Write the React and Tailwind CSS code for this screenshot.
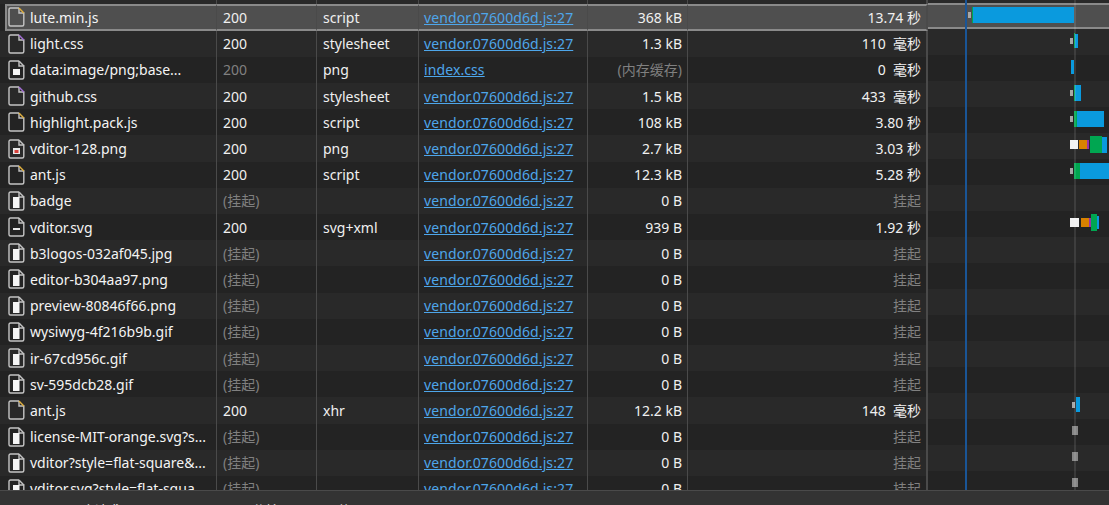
import React from "react";

const B = "#0a9ade";
const G = "#00a651";
const O = "#d98200";
const P = "#9b30a8";
const W = "#f2f2f2";
const S = "#a8a8a8";
const D = "#868686";

const PENDING_BAR = [[1072, 1078, 9, D]];

const rows = [
  { name: "lute.min.js", icon: "js", status: "200", type: "script", size: "368 kB", time: "13.74 秒", bars: [[968, 971, 6, S], [972, 973, 16, G], [973, 1074, 16, B]] },
  { name: "light.css", icon: "css", status: "200", type: "stylesheet", size: "1.3 kB", time: "110  毫秒", bars: [[1070, 1073, 6, S], [1074, 1075, 15, G], [1075, 1078, 14, B]] },
  { name: "data:image/png;base...", icon: "img", status: "200", dim: true, type: "png", link: "index.css", size: "(内存缓存)", dimSize: true, time: "0  毫秒", bars: [[1071, 1074, 14, B]] },
  { name: "github.css", icon: "css", status: "200", type: "stylesheet", size: "1.5 kB", time: "433  毫秒", bars: [[1070, 1073, 6, S], [1074, 1075, 16, G], [1075, 1081, 16, B]] },
  { name: "highlight.pack.js", icon: "js", status: "200", type: "script", size: "108 kB", time: "3.80 秒", bars: [[1070, 1073, 6, S], [1074, 1077, 16, G], [1077, 1104, 16, B]] },
  { name: "vditor-128.png", icon: "png", status: "200", type: "png", size: "2.7 kB", time: "3.03 秒", bars: [[1070, 1078, 9, W], [1079, 1087, 9, O], [1087, 1089, 9, P], [1090, 1102, 17, G], [1102, 1107, 16, B]] },
  { name: "ant.js", icon: "js", status: "200", type: "script", size: "12.3 kB", time: "5.28 秒", bars: [[1070, 1073, 6, S], [1074, 1080, 16, G], [1080, 1109, 16, B]] },
  { name: "badge", icon: "pending", status: "(挂起)", dim: true, type: "", size: "0 B", time: "挂起", dimTime: true },
  { name: "vditor.svg", icon: "svg", status: "200", type: "svg+xml", size: "939 B", time: "1.92 秒", bars: [[1070, 1079, 9, W], [1081, 1089, 9, O], [1089, 1091, 9, P], [1091, 1097, 17, G], [1097, 1099, 13, B]] },
  { name: "b3logos-032af045.jpg", icon: "pending", status: "(挂起)", dim: true, type: "", size: "0 B", time: "挂起", dimTime: true },
  { name: "editor-b304aa97.png", icon: "pending", status: "(挂起)", dim: true, type: "", size: "0 B", time: "挂起", dimTime: true },
  { name: "preview-80846f66.png", icon: "pending", status: "(挂起)", dim: true, type: "", size: "0 B", time: "挂起", dimTime: true },
  { name: "wysiwyg-4f216b9b.gif", icon: "pending", status: "(挂起)", dim: true, type: "", size: "0 B", time: "挂起", dimTime: true },
  { name: "ir-67cd956c.gif", icon: "pending", status: "(挂起)", dim: true, type: "", size: "0 B", time: "挂起", dimTime: true },
  { name: "sv-595dcb28.gif", icon: "pending", status: "(挂起)", dim: true, type: "", size: "0 B", time: "挂起", dimTime: true },
  { name: "ant.js", icon: "js", status: "200", type: "xhr", size: "12.2 kB", time: "148  毫秒", bars: [[1072, 1075, 6, S], [1076, 1080, 15, B]] },
  { name: "license-MIT-orange.svg?s...", icon: "pending", status: "(挂起)", dim: true, type: "", size: "0 B", time: "挂起", dimTime: true, bars: PENDING_BAR },
  { name: "vditor?style=flat-square&...", icon: "pending", status: "(挂起)", dim: true, type: "", size: "0 B", time: "挂起", dimTime: true, bars: PENDING_BAR },
  { name: "vditor.svg?style=flat-squa...", icon: "pending", status: "(挂起)", dim: true, type: "", size: "0 B", time: "挂起", dimTime: true, bars: PENDING_BAR },
];

function FileIcon({ kind }) {
  const corner = kind === "css" ? "#a46fd6" : kind === "js" ? "#e0b040" : "#c4c4c4";
  return (
    <svg width="17" height="20" viewBox="0 0 17 20" className="shrink-0" fill="none">
      <path d="M11 1H2.5Q1 1 1 2.5V17.5Q1 19 2.5 19H14.3Q15.8 19 15.8 17.5V6H11V1" stroke="#c4c4c4" strokeWidth="1.4" />
      <path d="M11 1L15.8 6" stroke={corner} strokeWidth="1.4" />
      {kind === "img" && <rect x="5" y="9" width="7" height="6" fill="#f5f5f5" />}
      {kind === "png" && (
        <>
          <rect x="5" y="9" width="7" height="6" fill="#e8e8e8" />
          <rect x="6.5" y="11" width="4" height="3" fill="#d8403a" />
        </>
      )}
      {kind === "svg" && <rect x="5" y="11" width="7" height="2" fill="#e8e8e8" />}
      {kind === "pending" && <rect x="5" y="6" width="6.5" height="11" fill="#f5f5f5" />}
    </svg>
  );
}

function Bars({ bars }) {
  let prev = 928;
  return (
    <div className="flex items-center h-full pb-[3px] overflow-hidden">
      {(bars || []).map(([from, to, h, color], i) => {
        const gap = from - prev;
        prev = to;
        return <div key={i} className="shrink-0" style={{ marginLeft: gap, width: to - from, height: h, background: color }} />;
      })}
    </div>
  );
}

function Row({ row, index }) {
  const selected = index === 0;
  const bg = selected ? "bg-[#4f4f4f] border-y-2 border-y-[#8a8a8a]" : index % 2 === 1 ? "bg-[#292929]" : "bg-[#232323]";
  const cell = `${bg} flex items-center min-w-0 overflow-hidden whitespace-pre border-r-[#4a4a4a]`;
  const height = selected ? "h-[26.4px]" : "h-[26.2px]";
  return (
    <div className={`grid grid-cols-[217px_100px_102px_169px_100px_240px] shrink-0 ${height}`}>
      <div className={`${cell} border-r gap-[5px] ${selected ? "ml-[5px] pl-[1px] border-l-2 border-l-[#8a8a8a]" : "pl-2"}`}>
        <FileIcon kind={row.icon} />
        <span className="text-[#f4f4f4]">{row.name}</span>
      </div>
      <div className={`${cell} border-r pl-[6px] ${row.dim ? "text-[#808080]" : "text-[#f0f0f0]"}`}>{row.status}</div>
      <div className={`${cell} border-r pl-[6px] text-[#f0f0f0]`}>{row.type}</div>
      <div className={`${cell} border-r pl-[5px]`}>
        <span className="text-[#4ea6ea] underline tracking-[0.1px]">{row.link || "vendor.07600d6d.js:27"}</span>
      </div>
      <div className={`${cell} border-r justify-end pr-[5px] ${row.dimSize ? "text-[#808080]" : "text-[#f0f0f0]"}`}>{row.size}</div>
      <div className={`${cell} border-r-2 justify-end pr-[5px] ${row.dimTime ? "text-[#808080]" : "text-[#f0f0f0]"}`}>{row.time}</div>
    </div>
  );
}

function WaterfallRow({ row, index }) {
  const bg = index === 0 ? "bg-[#4f4f4f] border-y-2 border-y-[#8a8a8a]" : index % 2 === 1 ? "bg-[#292929]" : "bg-[#232323]";
  return (
    <div className={`h-[26px] shrink-0 ${bg}`}>
      <Bars bars={row.bars} />
    </div>
  );
}

export default function App() {
  return (
    <div className="w-[1109px] h-[505px] overflow-hidden flex flex-col bg-[#333333] text-[14px] font-['Noto_Sans','Noto_Sans_CJK_SC',sans-serif]">
      <div className="relative h-[490px] shrink-0 overflow-hidden flex bg-[#232323]">
        <div className="w-[928px] shrink-0 flex flex-col">
          <div className="grid grid-cols-[217px_100px_102px_169px_100px_240px] h-[4.3px] shrink-0 bg-[#292929]">
            <div className="border-r border-r-[#4a4a4a]" />
            <div className="border-r border-r-[#4a4a4a]" />
            <div className="border-r border-r-[#4a4a4a]" />
            <div className="border-r border-r-[#4a4a4a]" />
            <div className="border-r border-r-[#4a4a4a]" />
            <div className="border-r-2 border-r-[#4a4a4a]" />
          </div>
          {rows.map((row, i) => (
            <Row key={i} row={row} index={i} />
          ))}
        </div>
        <div className="flex-1 min-w-0 flex flex-col">
          <div className="h-[3px] shrink-0 bg-[#292929]" />
          {rows.map((row, i) => (
            <WaterfallRow key={i} row={row} index={i} />
          ))}
        </div>
        <div className="absolute top-0 bottom-0 left-[1074px] w-[2px] bg-[#ffffff]/10" />
        <div className="absolute top-0 bottom-0 left-[965px] w-[2px] bg-[#1a5596]" />
      </div>
      <div className="border-t border-t-[#4a4a4a] pt-[10px] pl-[37px] flex text-[#e8e8e8] text-[13px] whitespace-pre">
        <span className="w-[203px]">39 / 45 个请求</span>
        <span className="w-[345px]">已传输 1.2 MB，共 1.2 MB</span>
        <span className="text-[#4ea6ea]">DOMContentLoaded</span>
      </div>
    </div>
  );
}
